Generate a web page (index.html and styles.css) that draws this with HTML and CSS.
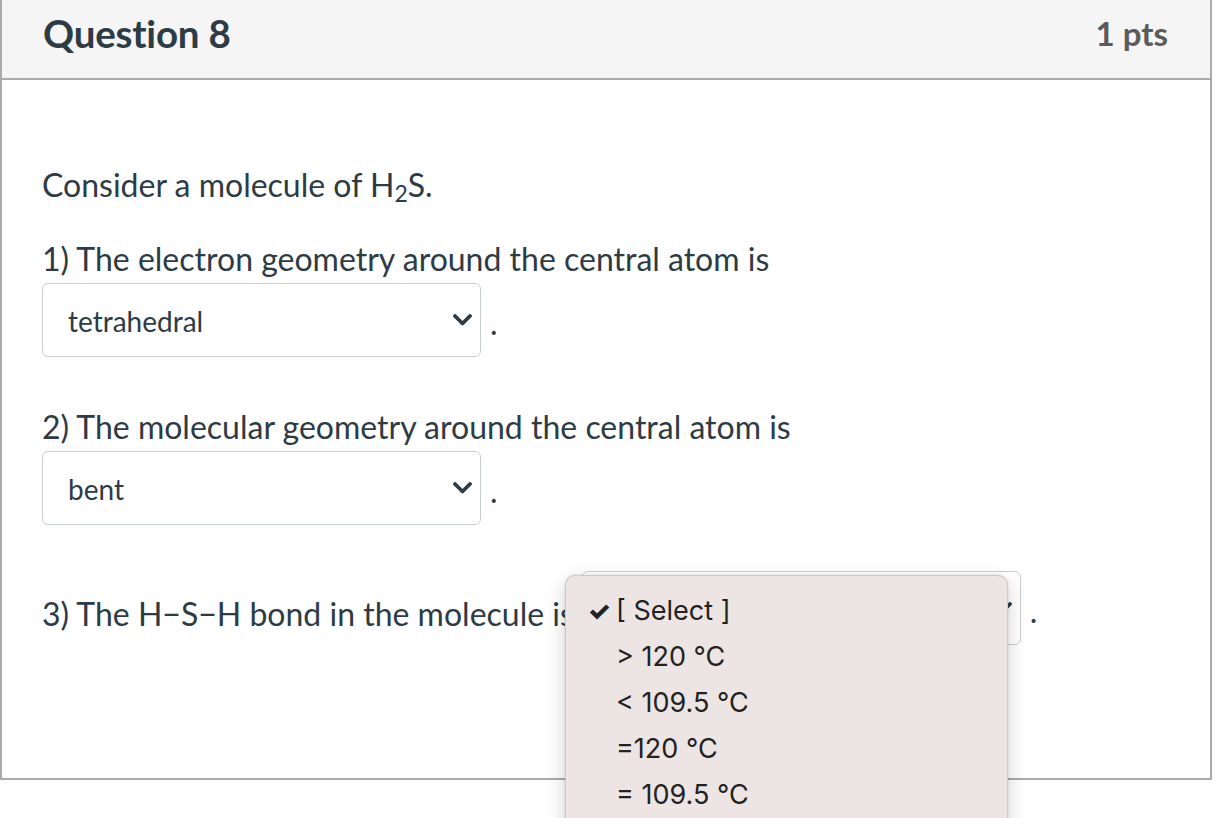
FILE: index.html
```html
<!DOCTYPE html>
<html>
<head>
<meta charset="utf-8">
<link rel="stylesheet" href="styles.css">
</head>
<body>
<div class="page">
  <div class="card">
    <div class="card-header">
      <h2 class="title">Question 8</h2>
      <div class="pts">1 pts</div>
    </div>
    <div class="card-body">
      <p class="intro">Consider a molecule of H<sub>2</sub>S.</p>
      <p class="prompt">1) The electron geometry around the central atom is</p>
      <div class="answer">
        <div class="select"><span class="sel-text">tetrahedral</span><svg class="chev" viewBox="0 0 19 12" width="19" height="12"><polyline points="2,2 9.5,9.5 17,2" fill="none" stroke="#2d3b45" stroke-width="3.8" stroke-linecap="round" stroke-linejoin="round"/></svg></div>
        <span class="dot">.</span>
      </div>
      <p class="prompt second">2) The molecular geometry around the central atom is</p>
      <div class="answer">
        <div class="select"><span class="sel-text">bent</span><svg class="chev" viewBox="0 0 19 12" width="19" height="12"><polyline points="2,2 9.5,9.5 17,2" fill="none" stroke="#2d3b45" stroke-width="3.8" stroke-linecap="round" stroke-linejoin="round"/></svg></div>
        <span class="dot">.</span>
      </div>
      <div class="answer inline">
        <span class="inline-text">3) The H−S−H bond in the molecule is</span>
        <div class="select faded"><span class="sel-text">[ Select ]</span><svg class="chev" viewBox="0 0 19 12" width="19" height="12"><polyline points="2,2 9.5,9.5 17,2" fill="none" stroke="#2d3b45" stroke-width="3.8" stroke-linecap="round" stroke-linejoin="round"/></svg></div>
        <span class="dot">.</span>
      </div>
    </div>
  </div>
  <div class="menu">
    <div class="menu-item"><span class="check">✓</span>[ Select ]</div>
    <div class="menu-item"><span class="check"></span>&gt; 120 °C</div>
    <div class="menu-item"><span class="check"></span>&lt; 109.5 °C</div>
    <div class="menu-item"><span class="check"></span>=120 °C</div>
    <div class="menu-item"><span class="check"></span>= 109.5 °C</div>
  </div>
</div>
</body>
</html>
```
FILE: styles.css
```css
* { box-sizing: border-box; }
html, body {
  margin: 0;
  padding: 0;
  background: #ffffff;
  overflow: hidden;
}
body {
  font-family: Lato, "Open Sans", sans-serif;
  color: #2d3b45;
}
.page {
  position: relative;
  width: 1222px;
  height: 818px;
}
.card {
  width: 1212px;
  border-left: 2px solid #aaaaaa;
  border-right: 2px solid #aaaaaa;
  border-bottom: 2px solid #aaaaaa;
}
.card-header {
  height: 80px;
  background: #f5f5f5;
  border-bottom: 2px solid #aaaaaa;
  display: flex;
  align-items: center;
  justify-content: space-between;
  padding: 0 42px 12px 41px;
}
.title {
  margin: 0;
  font-size: 38.5px;
  font-weight: 700;
  color: #2d3b45;
  letter-spacing: -0.2px;
}
.pts {
  font-size: 33px;
  font-weight: 700;
  color: #5b5b5b;
}
.card-body {
  padding: 85px 40px 133px 40px;
  font-size: 32px;
  line-height: 40px;
}
.card-body p {
  margin: 0;
}
.intro sub {
  font-size: 23px;
  line-height: 0;
  vertical-align: -5px;
}
.prompt {
  margin-top: 34px !important;
  margin-bottom: 4px !important;
}
.prompt.second {
  margin-top: 50px !important;
}
.answer {
  display: flex;
  align-items: flex-start;
}
.answer.inline {
  margin-top: 46px;
}
.select {
  width: 439px;
  height: 74px;
  border: 1px solid #c7cdd1;
  border-radius: 6px;
  background: #ffffff;
  display: flex;
  align-items: center;
  justify-content: space-between;
  padding: 0 8px 0 25px;
  font-size: 28px;
  color: #2d3b45;
}
.select .sel-text {
  padding-top: 2px;
}
.select.faded {
  margin-left: 8px;
}
.dot {
  margin-top: 20px;
  margin-left: 9px;
  font-size: 32px;
  line-height: 40px;
}
.inline-text {
  margin-top: 23px;
  white-space: nowrap;
}
.answer.inline .dot {
  margin-top: 20px;
}
.menu {
  position: absolute;
  left: 565px;
  top: 575px;
  width: 443px;
  height: 270px;
  background: #ece5e3;
  border: 1px solid rgba(0,0,0,0.12);
  border-radius: 10px;
  box-shadow: 0 6px 20px rgba(0,0,0,0.18), 0 0 2px rgba(0,0,0,0.15);
  padding-top: 12px;
  font-family: Inter, "Liberation Sans", sans-serif;
  font-size: 27px;
  color: #222222;
}
.menu-item {
  height: 46px;
  line-height: 46px;
  display: flex;
  align-items: center;
  padding-left: 22px;
}
.check {
  display: inline-block;
  width: 28px;
  font-size: 25px;
  font-weight: 700;
  -webkit-text-stroke: 0.8px #222222;
}
```
